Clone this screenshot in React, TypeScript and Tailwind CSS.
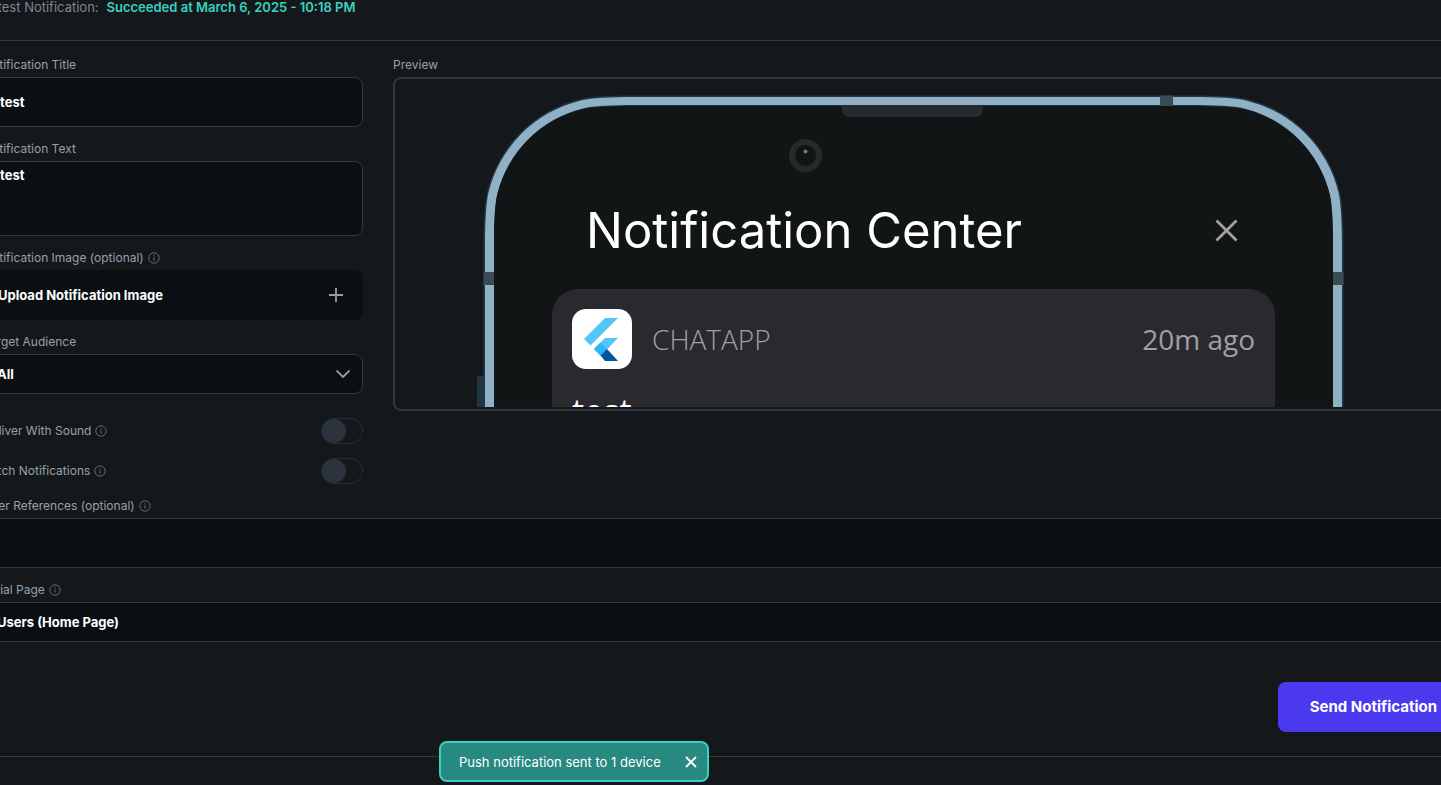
import React from "react";

const labelText = "text-[12px] leading-4 text-[#95a1ac]";
const fieldText = "text-[13px] leading-5 font-bold text-white";

function InfoIcon() {
  return (
    <svg viewBox="0 0 12 12" className="h-3 w-3 shrink-0" fill="none" stroke="#5f6a73" aria-hidden="true">
      <circle cx="6" cy="6" r="5.2" strokeWidth="1" />
      <path d="M6 5.4V8.6" strokeWidth="1.1" />
      <path d="M6 3.2V4.4" strokeWidth="1.1" />
    </svg>
  );
}

function FieldLabel({ htmlFor, text, info }: { htmlFor: string; text: string; info?: boolean }) {
  return (
    <div className="flex items-center gap-1">
      <label htmlFor={htmlFor} className={labelText}>
        {text}
      </label>
      {info && <InfoIcon />}
    </div>
  );
}

function ToggleRow({ id, text }: { id: string; text: string }) {
  return (
    <div className="flex h-10 items-center justify-between">
      <FieldLabel htmlFor={id} text={text} info />
      <input
        id={id}
        type="checkbox"
        role="switch"
        className="h-[26px] w-[42px] appearance-none rounded-full border border-[#262d34] bg-transparent before:block before:h-6 before:w-6 before:rounded-full before:bg-[#2b343c] checked:before:translate-x-4"
      />
    </div>
  );
}

// Outline of the handset: circular corners that ease into the straight edges.
function bodyOutline(left: number, right: number, top: number, r: number) {
  return [
    `M${left} 420V${top + 1.2 * r}`,
    `C${left} ${top + 1.016 * r} ${left + 0.008 * r} ${top + 0.84 * r} ${left + 0.029 * r} ${top + 0.76 * r}`,
    `A${r} ${r} 0 0 1 ${left + 0.76 * r} ${top + 0.029 * r}`,
    `C${left + 0.84 * r} ${top + 0.008 * r} ${left + 1.016 * r} ${top} ${left + 1.2 * r} ${top}`,
    `H${right - 1.2 * r}`,
    `C${right - 1.016 * r} ${top} ${right - 0.84 * r} ${top + 0.008 * r} ${right - 0.76 * r} ${top + 0.029 * r}`,
    `A${r} ${r} 0 0 1 ${right - 0.029 * r} ${top + 0.76 * r}`,
    `C${right - 0.008 * r} ${top + 0.84 * r} ${right} ${top + 1.016 * r} ${right} ${top + 1.2 * r}`,
    "V420Z",
  ].join("");
}

function PhoneFrame() {
  return (
    <svg viewBox="470 79 890 328" className="absolute inset-0 h-full w-full" aria-hidden="true">
      <rect x="477" y="376" width="8" height="40" rx="1" fill="#1f3543" />
      <path d={bodyOutline(483.5, 1343.5, 95.5, 126.5)} fill="#213947" />
      <path d={bodyOutline(485, 1342, 97, 125)} fill="#8fb0c5" />
      <path d={bodyOutline(494, 1333, 105, 117)} fill="#213947" />
      <path d={bodyOutline(494, 1333, 106, 116)} fill="#111516" />
      <rect x="1160" y="95.5" width="13" height="10.5" fill="#3a4b54" />
      <rect x="483.5" y="272" width="10.5" height="13" fill="#3a4b54" />
      <rect x="1333" y="272" width="10.5" height="13" fill="#3a4b54" />
      <path d="M841 105H984C983 106 983 107 983 109C983 114 980 117 975 117H850C845 117 842 114 842 109C842 107 842 106 841 105Z" fill="#272b2e" />
      <circle cx="805.5" cy="155.5" r="13.5" stroke="#262a2b" strokeWidth="6" fill="#111516" />
      <circle cx="805.5" cy="151.5" r="2" fill="#70777a" />
    </svg>
  );
}

function FlutterTile() {
  return (
    <svg viewBox="0 0 60 60" className="h-[60px] w-[60px] shrink-0" role="img" aria-label="App icon">
      <rect width="60" height="60" rx="14" fill="#fff" />
      <path d="M33 9H46L18.500 36.500L12 30Z" fill="#54c5f8" />
      <path d="M33 29H46L35 40.500L28.500 47L22 40Z" fill="#54c5f8" />
      <path d="M28.500 33.500L35 40L28.500 46.500L22 40Z" fill="#29b6f6" />
      <path d="M28.500 46.500L35 40L46 52H33Z" fill="#01579b" />
    </svg>
  );
}

function PhonePreview() {
  return (
    <div className="relative ml-[75px] h-full w-[890px]">
      <PhoneFrame />
      <div className="relative px-[82px] pt-[116px]">
        <div className="flex items-center justify-between pr-10 pl-[34px]">
          <h2 className="text-[49px] leading-[72px] font-normal whitespace-nowrap text-white">Notification Center</h2>
          <button type="button" aria-label="Close notification center">
            <svg viewBox="0 0 24 24" className="h-6 w-6" stroke="#a59fa1" strokeWidth="2.800" fill="none">
              <path d="M2.500 1.500L22.500 21.500M22.500 1.500L2.500 21.500" />
            </svg>
          </button>
        </div>
        <article className="mt-[22px] h-[200px] w-[723px] rounded-[26px] bg-[#2a292e] px-5 pt-5 font-['Open_Sans',sans-serif]">
          <div className="flex items-center">
            <FlutterTile />
            <span className="ml-5 text-[28px] leading-[60px] font-light text-[#a39fa2]">CHATAPP</span>
            <span className="ml-auto text-[28px] leading-[60px] text-[#a39fa2]">20m ago</span>
          </div>
          <p className="mt-[18px] text-[34px] leading-[48px] text-white">test</p>
        </article>
      </div>
    </div>
  );
}

export default function App() {
  return (
    <div className="min-h-screen overflow-hidden bg-[#14181b] font-['Inter',sans-serif]">
      <main className="-mr-7 -ml-[17px]">
        <header className="flex h-[41px] items-start gap-2 border-b border-[#323a42]">
          <span className="text-[13px] leading-[14px] text-[#7c8791]">Latest Notification:</span>
          <span className="text-[13px] leading-[14px] font-semibold text-[#39d2c0]">
            Succeeded at March 6, 2025 - 10:18 PM
          </span>
        </header>

        <form onSubmit={(event) => event.preventDefault()}>
          <div className="flex gap-[30px] pt-4">
            <div className="flex w-[380px] shrink-0 flex-col gap-[14px]">
              <div>
                <FieldLabel htmlFor="title" text="Notification Title" />
                <input
                  id="title"
                  defaultValue="test"
                  className={`mt-1 block h-[50px] w-full rounded-lg border border-[#323a42] bg-[#090f13] px-4 ${fieldText}`}
                />
              </div>
              <div>
                <FieldLabel htmlFor="body" text="Notification Text" />
                <textarea
                  id="body"
                  defaultValue="test"
                  className={`mt-1 block h-[75px] w-full resize-none rounded-lg border border-[#323a42] bg-[#090f13] px-4 py-[3px] ${fieldText}`}
                />
              </div>
              <div>
                <FieldLabel htmlFor="upload" text="Notification Image (optional)" info />
                <button
                  id="upload"
                  type="button"
                  className={`mt-1 flex h-[50px] w-full items-center justify-between rounded-lg bg-[#090f13] pr-5 pl-[15px] ${fieldText}`}
                >
                  Upload Notification Image
                  <svg viewBox="0 0 14 14" className="h-3.5 w-3.5" stroke="#95a1ac" strokeWidth="1.800" aria-hidden="true">
                    <path d="M7 0V14M0 7H14" />
                  </svg>
                </button>
              </div>
              <div>
                <FieldLabel htmlFor="audience" text="Target Audience" />
                <div className="relative mt-1">
                  <select
                    id="audience"
                    className={`block h-10 w-full appearance-none rounded-lg border border-[#323a42] bg-[#090f13] px-[13px] ${fieldText}`}
                  >
                    <option>All</option>
                  </select>
                  <svg
                    viewBox="0 0 14 8"
                    className="pointer-events-none absolute top-4 right-[13px] h-2 w-3.5"
                    stroke="#95a1ac"
                    strokeWidth="1.800"
                    fill="none"
                    aria-hidden="true"
                  >
                    <path d="M0.500 0.500L7 7L13.500 0.500" />
                  </svg>
                </div>
              </div>
              <div className="pt-[3px]">
                <ToggleRow id="sound" text="Deliver With Sound" />
                <ToggleRow id="batch" text="Batch Notifications" />
              </div>
            </div>

            <section aria-label="Preview" className="min-w-0 flex-1">
              <h3 className={labelText}>Preview</h3>
              <div className="mt-1 h-[334px] overflow-hidden rounded-lg border-2 border-[#2f3741] pb-0.5">
                <div className="h-full overflow-hidden">
                  <PhonePreview />
                </div>
              </div>
            </section>
          </div>

          <div className="pt-[7px]">
            <FieldLabel htmlFor="users" text="User References (optional)" info />
            <input
              id="users"
              className={`mt-1 block h-[50px] w-full rounded-lg border border-[#323a42] bg-[#090f13] px-4 ${fieldText}`}
            />
          </div>
          <div className="pt-[14px]">
            <FieldLabel htmlFor="page" text="Initial Page" info />
            <select
              id="page"
              className={`mt-1 block h-10 w-full appearance-none rounded-lg border border-[#323a42] bg-[#090f13] px-[13px] ${fieldText}`}
            >
              <option>Users (Home Page)</option>
            </select>
          </div>
          <div className="flex justify-end border-b border-[#323a42] pt-10 pb-6">
            <button
              type="submit"
              className="h-[50px] rounded-lg bg-[#4b39ef] px-8 text-[15px] leading-5 font-bold whitespace-nowrap text-white"
            >
              Send Notification
            </button>
          </div>
        </form>
      </main>

      <div
        role="status"
        className="fixed bottom-[3px] left-[439px] flex h-[41px] w-[270px] items-center justify-between rounded-lg border-2 border-[#39d2c0] bg-[#27897f] pr-2.5 pl-[18px] text-[13px] leading-5 text-white"
      >
        Push notification sent to 1 device
        <button type="button" aria-label="Dismiss">
          <svg viewBox="0 0 12 12" className="h-3 w-3" stroke="#fff" strokeWidth="1.800" aria-hidden="true">
            <path d="M1 1L11 11M11 1L1 11" />
          </svg>
        </button>
      </div>
    </div>
  );
}
